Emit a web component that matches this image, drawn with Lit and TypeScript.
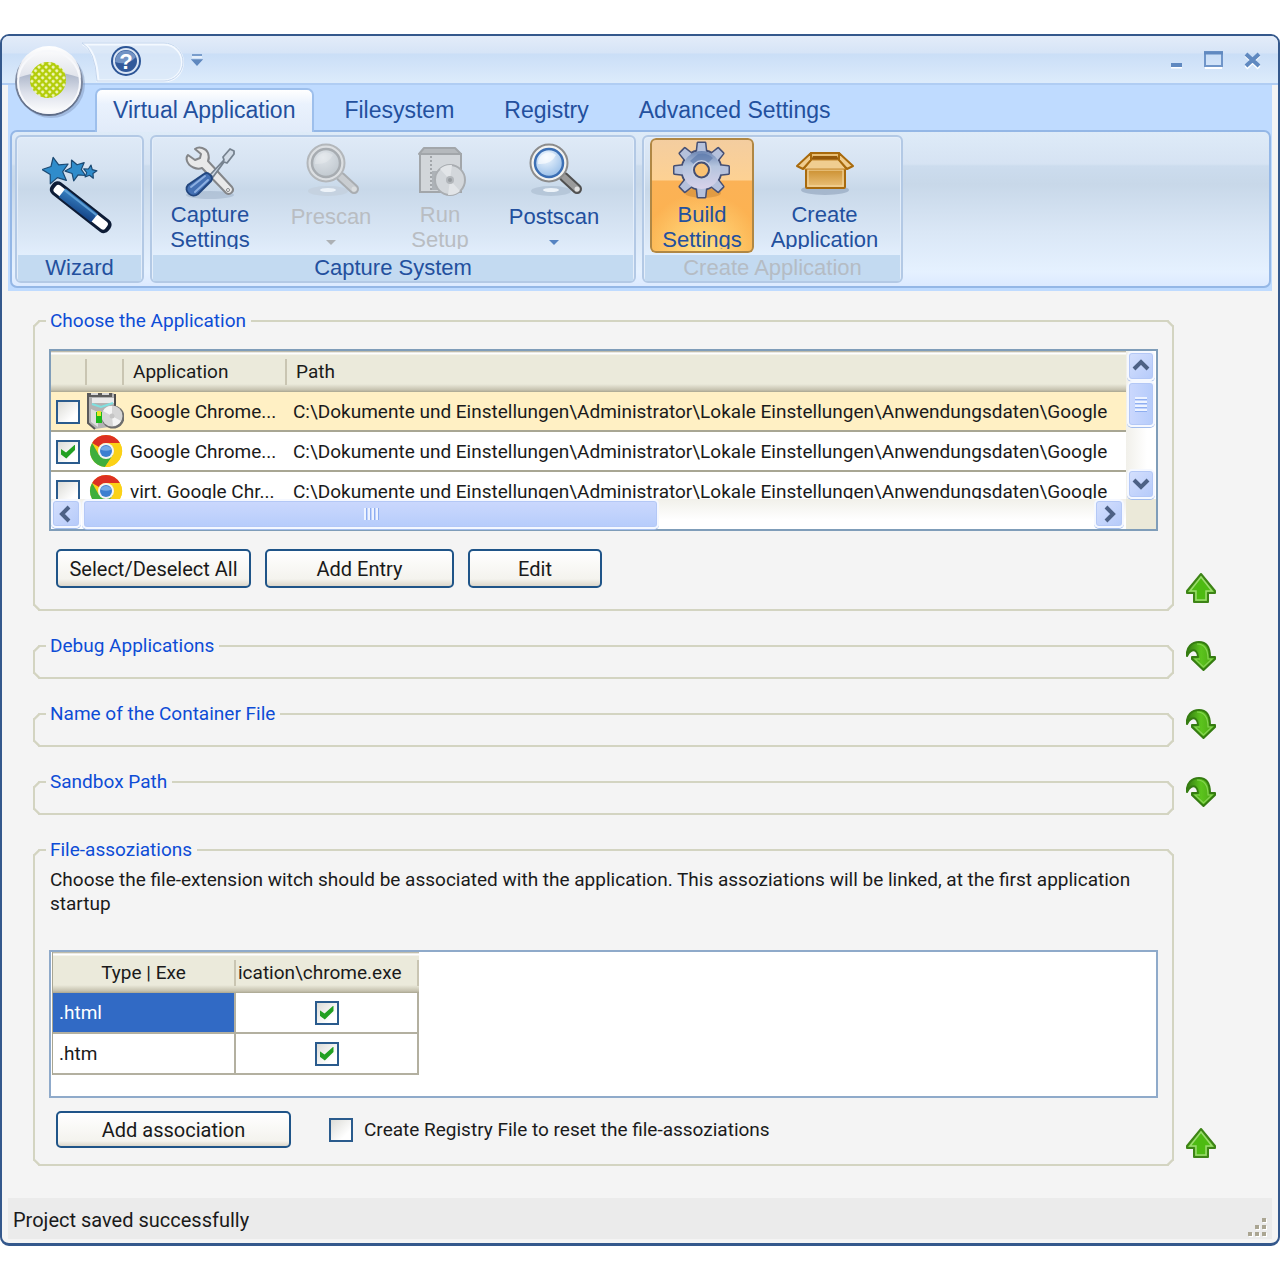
import { LitElement, html, css, svg, nothing, type TemplateResult } from "lit";
import { customElement, state } from "lit/decorators.js";
import { classMap } from "lit/directives/class-map.js";

interface AppEntry {
  name: string;
  icon: "setup" | "chrome";
  checked: boolean;
}

const INSTALL_PATH =
  "C:\\Dokumente und Einstellungen\\Administrator\\Lokale Einstellungen\\Anwendungsdaten\\Google";

const ENTRIES: AppEntry[] = [
  { name: "Google Chrome...", icon: "setup", checked: false },
  { name: "Google Chrome...", icon: "chrome", checked: true },
  { name: "virt. Google Chr...", icon: "chrome", checked: false },
];

const TABS = ["Virtual Application", "Filesystem", "Registry", "Advanced Settings"];

/* ---------- icons ---------- */

const orbIcon = html`<svg width="72" height="74" viewBox="0 0 72 74" aria-hidden="true">
  <defs>
    <linearGradient id="orbRing" x1="0" y1="0" x2="0" y2="1">
      <stop offset="0" stop-color="#9aa3b5" /><stop offset="1" stop-color="#5d6b86" />
    </linearGradient>
    <linearGradient id="orbTop" x1="0" y1="0" x2="0" y2="1">
      <stop offset="0" stop-color="#ffffff" /><stop offset="1" stop-color="#dfe2ea" />
    </linearGradient>
    <linearGradient id="orbLow" x1="0" y1="0.35" x2="0" y2="1">
      <stop offset="0" stop-color="#aab4c8" /><stop offset="0.5" stop-color="#dde1eb" /><stop offset="1" stop-color="#ffffff" />
    </linearGradient>
    <pattern id="orbDots" width="5" height="5" patternUnits="userSpaceOnUse" patternTransform="rotate(45 35 36)">
      <rect width="5" height="5" fill="#b3cd0a" /><circle cx="2.5" cy="2.5" r="1.5" fill="#f6fac6" />
    </pattern>
  </defs>
  <circle cx="37" cy="38" r="34" fill="#7d93b8" opacity="0.45" />
  <circle cx="35" cy="36" r="34" fill="url(#orbRing)" />
  <circle cx="35" cy="36" r="32" fill="url(#orbLow)" />
  <path d="M3 32A32 32 0 0 1 67 32Q51 26 35 26T3 32Z" fill="url(#orbTop)" />
  <circle cx="35" cy="36" r="31" fill="none" stroke="#f7f8fb" stroke-width="2" />
  <circle cx="34" cy="34" r="18" fill="url(#orbDots)" />
</svg>`;

const helpIcon = html`<svg width="104" height="40" viewBox="0 0 104 40" aria-hidden="true">
  <path d="M2 2Q15 8 17 39H83A18 18 0 0 0 83 2Z" fill="#e0ebf9" fill-opacity="0.6" stroke="#f4f9ff" stroke-width="3" />
  <path d="M1 1Q14 8 16 39H83A19 19 0 0 0 83 1Z" fill="none" stroke="#c3d5ed" stroke-width="1" />
  <circle cx="45" cy="19" r="15" fill="#2c5596" />
  <circle cx="45" cy="19" r="13" fill="#dbe6f5" />
  <circle cx="45" cy="19" r="11" fill="#31599a" />
  <path d="M34 20A11 11 0 0 1 55 15Q47 24 34 20Z" fill="#7293c4" />
  <text x="45" y="27" text-anchor="middle" font-family="Liberation Sans, sans-serif" font-weight="700" font-size="22" fill="#fff">?</text>
</svg>`;

const star = (cx: number, cy: number, r: number, turn: number) => {
  const pts = Array.from({ length: 10 }, (_, i) => {
    const a = ((turn + i * 36) * Math.PI) / 180;
    const d = i % 2 ? r * 0.48 : r;
    return `${(cx + d * Math.sin(a)).toFixed(1)},${(cy - d * Math.cos(a)).toFixed(1)}`;
  }).join(" ");
  return svg`<polygon points=${pts} fill="#2f8ccb" stroke="#1c4a73" stroke-width="1.2" stroke-linejoin="round" />`;
};

const wandIcon = html`<svg width="76" height="84" viewBox="0 0 76 84" aria-hidden="true">
  <defs>
    <linearGradient id="wand" x1="0" y1="0" x2="1" y2="1">
      <stop offset="0" stop-color="#3a86c6" /><stop offset="1" stop-color="#134083" />
    </linearGradient>
  </defs>
  ${star(14, 19, 14, -12)} ${star(34, 18, 11, -24)} ${star(48, 20, 7, 8)}
  <g transform="translate(14 34) rotate(38)">
    <rect x="-4" y="-6" width="73" height="15" rx="6" fill="#0d1c36" />
    <rect x="0" y="-3" width="65" height="9" rx="3" fill="#fff" />
    <rect x="9" y="-4" width="41" height="11" fill="url(#wand)" />
    <rect x="9" y="-3" width="41" height="2" fill="#5f9fd4" />
  </g>
</svg>`;

const toolsIcon = html`<svg width="64" height="64" viewBox="0 0 64 64" aria-hidden="true">
  <ellipse cx="32" cy="57" rx="24" ry="4" fill="#8fa2bb" opacity="0.4" />
  <path d="M17 11C21 8 28 10 30 15C31 18 31 21 30 23L54 49C57 53 52 58 48 55L24 30C19 32 11 29 9 23C8 20 9 18 10 17L17 22L22 20L23 16Z"
    fill="#e9e9e9" stroke="#848689" stroke-width="2" stroke-linejoin="round" />
  <circle cx="50" cy="52" r="1.5" fill="#fff" stroke="#848689" />
  <path d="M32 37L46 22L45 19L52 11L56 13L56 16L49 25L46 24L35 39Z" fill="#d2dce8" stroke="#76828f" stroke-width="1.8" stroke-linejoin="round" />
  <path d="M26 36C30 33 36 39 33 43L20 56C14 61 5 53 10 47Z" fill="#4571b4" stroke="#23477f" stroke-width="2" />
  <path d="M13 49L27 38M17 54L30 42" stroke="#8db0e2" stroke-width="2" stroke-linecap="round" />
</svg>`;

const lensIcon = (off: boolean) => html`<svg width="64" height="64" viewBox="0 0 64 64" aria-hidden="true">
  <defs>
    <radialGradient id=${off ? "glassOff" : "glassOn"} cx="0.4" cy="0.3" r="0.8">
      <stop offset="0" stop-color=${off ? "#e0e5ea" : "#f2f9ff"} />
      <stop offset="1" stop-color=${off ? "#bdc5cc" : "#8fb8e6"} />
    </radialGradient>
  </defs>
  <ellipse cx="29" cy="53" rx="20" ry="5" fill=${off ? "#c3cfdb" : "#aebfd2"} opacity="0.7" />
  <ellipse cx="29" cy="52" rx="8" ry="2" fill="#edf3f9" />
  <path d="M42 39L55 51" stroke=${off ? "#a9adb1" : "#505050"} stroke-width="10" stroke-linecap="round" />
  <path d="M42 39L55 51" stroke=${off ? "#c9cdd1" : "#9b9b9b"} stroke-width="6" stroke-linecap="round" />
  <circle cx="55" cy="51" r="2.5" fill=${off ? "#dadddf" : "#e0e0e0"} />
  <circle cx="27" cy="25" r="18.5" fill=${off ? "#dcdfe2" : "#f3f3f1"} stroke=${off ? "#b3b7bb" : "#8c8c8c"} stroke-width="2" />
  <circle cx="27" cy="25" r="14" fill=${off ? "url(#glassOff)" : "url(#glassOn)"} stroke=${off ? "#a7acb1" : "#3c6fb4"} stroke-width="2.5" />
  <path d="M16 26A11 11 0 0 1 34 17Q29 27 16 26Z" fill="#fff" opacity=${off ? "0.2" : "0.6"} />
</svg>`;

const discBoxIcon = html`<svg width="64" height="64" viewBox="0 0 64 64" aria-hidden="true">
  <path d="M16 10H47L53 16H11Z" fill="#b5b9bd" stroke="#a2a6aa" stroke-width="2" stroke-linejoin="round" />
  <rect x="12" y="16" width="41" height="38" fill="#d2d6da" stroke="#a2a6aa" stroke-width="2" />
  <path d="M23 18V53" stroke="#a2a6aa" stroke-width="2" stroke-dasharray="2 2" />
  <path d="M24 33H34V52H24Z" fill="#adb2b7" />
  <circle cx="42" cy="42" r="15" fill="#d3d7db" stroke="#a9adb1" stroke-width="2" />
  <path d="M42 42L32 31A15 15 0 0 1 44 27ZM42 42L52 53A15 15 0 0 1 40 57Z" fill="#e2e5e8" />
  <circle cx="42" cy="42" r="4" fill="#b3b7bb" /><circle cx="42" cy="42" r="2" fill="#979b9f" />
</svg>`;

const gearTeeth = [0, 45, 90, 135, 180, 225, 270, 315].map(
  (a) => svg`<path d="M27 14L28 5H35L36 14Z" transform="rotate(${a} 31.5 32)" />`
);
const gearIcon = html`<svg width="64" height="64" viewBox="0 0 64 64" aria-hidden="true">
  <defs>
    <linearGradient id="gear" x1="0" y1="0" x2="0" y2="1">
      <stop offset="0" stop-color="#6c86b4" /><stop offset="0.4" stop-color="#b4c4de" /><stop offset="1" stop-color="#d8d2ea" />
    </linearGradient>
  </defs>
  <ellipse cx="33" cy="55" rx="18" ry="5" fill="#b9772a" opacity="0.4" />
  <g fill="#a9b8d6" stroke="#454f73" stroke-width="3" stroke-linejoin="round">${gearTeeth}</g>
  <circle cx="31.5" cy="32" r="20" fill="#a9b8d6" stroke="#454f73" stroke-width="2" />
  <g fill="#b5c1dc">${gearTeeth}</g>
  <circle cx="31.5" cy="32" r="19" fill="url(#gear)" />
  <path d="M20 23L31 32L43 20A16 16 0 0 0 28 16Z" fill="#5674a8" opacity="0.6" />
  <circle cx="31.5" cy="32" r="10" fill="#c7cfe3" />
  <circle cx="31.5" cy="32" r="7.5" fill="#fbc272" stroke="#454f73" stroke-width="2" />
</svg>`;

const cartonIcon = html`<svg width="64" height="64" viewBox="0 0 64 64" aria-hidden="true">
  <defs>
    <linearGradient id="carton" x1="0" y1="0" x2="0" y2="1">
      <stop offset="0" stop-color="#c98c2b" /><stop offset="1" stop-color="#ecc37c" />
    </linearGradient>
  </defs>
  <ellipse cx="32" cy="52" rx="24" ry="5" fill="#8195b0" opacity="0.5" />
  <rect x="13" y="30" width="39" height="20" rx="1" fill="url(#carton)" stroke="#a86a0d" stroke-width="2" />
  <rect x="15" y="32" width="35" height="16" fill="none" stroke="#f3d59d" stroke-width="1.2" />
  <path d="M18 15H46L52 24H12Z" fill="#e8bd72" stroke="#a86a0d" stroke-width="2" stroke-linejoin="round" />
  <path d="M20 18H44L46 22H18Z" fill="#95590a" />
  <path d="M18 22H46L53 31H11Z" fill="#f0cd90" stroke="#c58a30" stroke-width="1.2" stroke-linejoin="round" />
  <path d="M18 15L4 28L10 31L18 22ZM46 15L60 28L54 31L46 22Z" fill="#f0cd90" stroke="#a86a0d" stroke-width="2" stroke-linejoin="round" />
</svg>`;

const chromeIcon = html`<svg width="36" height="36" viewBox="0 0 36 36" aria-hidden="true">
  <circle cx="19" cy="18" r="16" fill="#fbd116" />
  <path d="M5.100 10A16 16 0 0 1 32.900 10H19A8 8 0 0 0 12 14Z" fill="#dd3022" />
  <path d="M5.100 10A16 16 0 0 0 18 34L26 22L12 22Z" fill="#3fae3c" />
  <path d="M18 34A16 16 0 0 0 32.900 10H19L26 22Z" fill="#fbd116" />
  <circle cx="19" cy="18" r="8" fill="#f4f4f0" />
  <circle cx="19" cy="18" r="6" fill="#3b7fd0" />
  <path d="M13.500 16.500A6 6 0 0 1 24.500 16.500Q19 19 13.500 16.500Z" fill="#77abe6" />
</svg>`;

const setupIcon = html`<svg width="38" height="38" viewBox="0 0 38 38" aria-hidden="true">
  <path d="M1 1H26L29 4V34L8 37L1 31Z" fill="#b3b3b3" />
  <path d="M1 1H25V5H1Z" fill="#5c5c5c" /><path d="M4 1H11V3H4ZM15 1H22V3H15Z" fill="#d8d8d8" />
  <path d="M5 6H27V11H5Z" fill="#e9e9e9" />
  <path d="M1 1V31L8 37" fill="none" stroke="#5a5a5a" stroke-width="2" />
  <path d="M28 2V14" stroke="#4c4c4c" stroke-width="2" />
  <path d="M5 12L14 15L26 11" fill="none" stroke="#7fe0e0" stroke-width="2" />
  <path d="M4 17L11 20V35L4 30Z" fill="#dedede" />
  <circle cx="26" cy="25" r="11.500" fill="#6e6e6e" /><circle cx="25" cy="24" r="10.500" fill="#d6d6d6" />
  <path d="M25 24L16 19A10 10 0 0 1 25 14ZM25 24L34 29A10 10 0 0 1 26 34Z" fill="#f4f4f4" />
  <circle cx="25" cy="24" r="2.500" fill="#c5c5c5" />
  <path d="M9 20H15V31H9Z" fill="#1cb81c" /><path d="M10 19H14V24H10Z" fill="#e9e62a" />
</svg>`;

const upIcon = html`<svg width="30" height="30" viewBox="0 0 30 30" aria-hidden="true">
  <path d="M15 1L29 18V20H22V29H8V20H1V18Z" fill="#5fbf22" stroke="#3d8416" stroke-width="2" stroke-linejoin="round" />
  <path d="M15 4L26 18H20V27H10V18H4Z" fill="#4dbb12" stroke="#9bdb6f" stroke-width="1.500" />
</svg>`;

const downIcon = html`<svg width="30" height="30" viewBox="0 0 30 30" aria-hidden="true">
  <defs>
    <linearGradient id="bend" x1="0" y1="0" x2="1" y2="0">
      <stop offset="0" stop-color="#347a12" /><stop offset="0.5" stop-color="#5cc41d" /><stop offset="1" stop-color="#49a513" />
    </linearGradient>
  </defs>
  <path d="M1 15C0 6 6 1 13 1C21 1 24 7 24 16H29V18L17.500 29L6 18V16H12C12 11 9 8 5 10C3 11 2 13 1 15Z"
    fill="url(#bend)" stroke="#357c11" stroke-width="2" stroke-linejoin="round" />
  <path d="M11 3C19 3 22 9 22 18H26L17.500 26L9 18H14" fill="none" stroke="#86d353" stroke-width="1.200" />
</svg>`;

const chevron = (d: string) => html`<svg width="20" height="20" viewBox="0 0 20 20" aria-hidden="true">
  <path d=${d} fill="none" stroke="#4d6185" stroke-width="4" />
</svg>`;

@customElement("app-root")
export class AppRoot extends LitElement {
  @state() private activeTab = 0;
  @state() private open = new Set(["apps", "assoc"]);

  static styles = css`
    :host {
      display: block;
      padding: 34px 0;
      background: #fff;
      color: #1a1a1a;
      font: 19px/24px Roboto, "Liberation Sans", sans-serif;
    }
    * { box-sizing: border-box; }
    button, input { font: inherit; color: inherit; margin: 0; }
    button { padding: 0; border: 0; background: none; }
    svg { display: block; flex: none; }

    .window {
      position: relative;
      border: 2px solid #34588c;
      border-bottom-width: 3px;
      border-radius: 9px;
      background: #f4f4f4;
      overflow: hidden;
    }
    .titlebar {
      display: flex;
      align-items: center;
      height: 49px;
      padding: 5px 16px 0 79px;
      background: linear-gradient(#e3ecf9 0, #d6e4f7 17px, #cadef7 18px, #dcebfb 46px);
      border-bottom: 2px solid #b0cdf3;
    }
    .qat-more { margin: 0 0 4px 5px; }
    .window-buttons { display: flex; gap: 19px; margin: 0 0 4px auto; align-items: center; }
    .orb { position: absolute; left: 12px; top: 10px; }

    .ribbon {
      margin: 0 6px;
      padding: 3px 0;
      background: #bfdbff;
      color: #23509e;
      font: 22px/25px "Liberation Sans", Arial, sans-serif;
    }
    .tabs { display: flex; padding-left: 87px; position: relative; font-size: 23px; }
    .tab { height: 44px; padding: 0 25px; }
    .tab.active {
      padding: 0 17px 2px 16px;
      margin-right: 5px;
      border: 2px solid #9dbfec;
      border-bottom: 0;
      border-radius: 7px 7px 0 0;
      background: linear-gradient(#fff, #eaf2fd 14px, #e1ebf9);
    }
    .panel {
      display: flex;
      gap: 6px;
      margin: -2px 1px 0 2px;
      padding: 3px;
      border: 2px solid #94b7e6;
      border-radius: 7px;
      background: linear-gradient(#deebf8, #d6e3f3 32px, #ccdcee 34px, #c8d8e9 52px, #dae7f6 100px, #e5f1ff 140px, #dceaff);
    }
    .group {
      display: flex;
      flex-direction: column;
      border: 2px solid #b3c9e5;
      border-radius: 6px;
      box-shadow: inset 0 0 0 1px #e4eefa;
      background: linear-gradient(#dfeaf7, #d5e2f1 32px, #c8d8e9 52px, #dae7f6 100px, #e3effd 120px);
    }
    .group-body { display: flex; height: 118px; padding: 1px 6px 0; }
    .group-label {
      height: 26px;
      margin: 0 1px;
      text-align: center;
      line-height: 26px;
      background: #c3daf1;
    }
    .group-label.off { color: #b5bcc4; }
    .wizard { width: 129px; }
    .capture { width: 486px; }
    .create { width: 261px; }

    .tool {
      display: flex;
      flex-direction: column;
      align-items: center;
      height: 115px;
      border-radius: 6px;
      white-space: pre-line;
    }
    .tool:disabled { color: #b9bdc2; }
    .tool-label { height: 47px; overflow: hidden; }
    .tool-label.menu { height: 38px; padding-top: 2px; }
    .w-s { width: 80px; }
    .w-m { width: 104px; }
    .w-l { width: 138px; }
    .grow { flex: 1; }
    .tool.wand { padding-top: 14px; }
    .caret { border: 5px solid transparent; border-top-color: #5583c2; border-bottom: 0; }
    .tool:disabled .caret { border-top-color: #adb1b5; }
    .tool.selected {
      background:
        radial-gradient(60px 60px at 50% 100%, #ffe38b, #ffd27400),
        linear-gradient(#f3cda0 0, #fdd193 42px, #fbb256 43px, #fdb24d 100%);
      box-shadow: inset 0 0 0 2px #b08744;
    }

    main {
      display: flex;
      flex-direction: column;
      gap: 23px;
      padding: 18px 62px 32px 31px;
    }
    .section { display: flex; align-items: flex-end; gap: 12px; }
    fieldset {
      flex: 1;
      min-width: 0;
      min-height: 45px;
      margin: 0;
      padding: 0 14px;
      border: 2px solid #d3d4c1;
      border-radius: 6px;
      corner-shape: bevel;
    }
    legend { margin-left: -3px; padding: 0 5px 0 4px; color: #0d4cd6; }
    .toggle { margin-bottom: 8px; }

    .push {
      height: 39px;
      border: 2px solid #1f5488;
      border-radius: 5px;
      background: linear-gradient(#fff, #f4f3ee 28px, #dcd7cb);
      font-size: 20px;
    }
    .push.short { height: 37px; }
    .w195 { min-width: 195px; }
    .w189 { min-width: 189px; }
    .w134 { min-width: 134px; }
    .w235 { min-width: 235px; }
    .actions { display: flex; align-items: center; gap: 14px; padding: 18px 7px 21px; }
    .actions.assoc { gap: 38px; padding: 13px 7px 16px; }
    .check-label { display: flex; align-items: center; gap: 11px; }

    input[type="checkbox"] {
      appearance: none;
      display: grid;
      place-items: center;
      flex: none;
      width: 24px;
      height: 24px;
      border: 2px solid #2a5b8d;
      background: linear-gradient(135deg, #dcdcd7, #fff 75%);
    }
    input:checked::before {
      content: "";
      width: 14px;
      height: 14px;
      background: #22a022;
      clip-path: polygon(0 32%, 36% 58%, 100% 0, 100% 40%, 38% 100%, 0 72%);
    }

    .list {
      display: grid;
      grid-template: 148px 30px / 1fr 30px;
      margin-top: 16px;
      border: 2px solid #7f9db9;
      background: #ebe9d9;
    }
    .viewport { overflow: hidden; background: #fff; }
    table { border-collapse: separate; border-spacing: 0; table-layout: fixed; }
    .apps { width: 100%; }
    th, td { height: 41px; padding: 0; font-weight: 400; text-align: left; white-space: nowrap; overflow: hidden; }
    thead th { background: linear-gradient(#a9a690 0, #fff 2px, #fff 3px, #ebeadb 4px, #ebeadb 33px, #c5c1ae 39px, #a9a690); }
    .head { display: flex; align-items: center; height: 26px; border-right: 2px solid #c9c5b2; box-shadow: 1px 0 #fff; }
    .apps th:last-child .head { border: 0; }
    .apps th .head { padding-left: 9px; }
    .apps tbody td { height: 40px; border-bottom: 2px solid #a8a693; padding: 1px 0 0 6px; }
    .apps tbody tr.hot td { background: #fff0c4; }
    .apps tbody td.first { padding-left: 5px; }
    .apps tbody td.pic { padding: 0; }
    .c-check { width: 36px; }
    .c-icon { width: 37px; }
    .c-name { width: 163px; }

    .bar { display: flex; background: linear-gradient(#f1f0ea, #fff 70%); }
    .bar.v { flex-direction: column; background: linear-gradient(90deg, #f1f0ea, #fff 70%); }
    .bar-button, .thumb {
      display: grid;
      place-items: center;
      border: 2px solid #f5f8ff;
      border-radius: 5px;
      box-shadow: inset 0 0 0 1px #b4c8f6, 0 1px #a3bdec;
      background: linear-gradient(135deg, #d5e0fd, #b5cafa);
    }
    .bar-button { width: 30px; height: 29px; flex: none; }
    .v .bar-button { width: 28px; height: 30px; margin-left: 1px; }
    .track { flex: 1; display: flex; }
    .h .thumb { width: 57%; margin-left: 1px; background: linear-gradient(#cbd8fd, #b6ccfb); }
    .v .thumb { height: 46px; width: 28px; margin-left: 1px; background: linear-gradient(90deg, #cbd8fd, #b6ccfb); }
    .h .bar-button:last-child { margin-right: 2px; }

    .hint { margin: 6px 0 34px 1px; }
    .assoc-box { height: 148px; border: 2px solid #8faaca; background: #fff; padding-left: 1px; }
    .assoc-table { width: 367px; border-left: 1px solid #a8a693; }
    .assoc-table th .head { justify-content: center; }
    .assoc-table th:last-child .head { justify-content: flex-start; padding-left: 2px; }
    .assoc-table tbody td { border-right: 2px solid #b3b0a0; border-bottom: 2px solid #b3b0a0; padding-left: 6px; }
    .assoc-table tbody td.picked { background: #316ac5; color: #fff; }
    .assoc-table tbody td.tick { padding-left: 0; }
    .assoc-table input { margin: 0 auto; }

    footer {
      display: flex;
      justify-content: space-between;
      align-items: center;
      height: 41px;
      margin: 0 6px 4px;
      padding: 5px 5px 2px;
      background: #ebebeb;
      font-size: 20px;
    }
    .grip { align-self: flex-end; }
  `;

  private toggle(id: string) {
    const next = new Set(this.open);
    next.has(id) ? next.delete(id) : next.add(id);
    this.open = next;
  }

  private section(id: string, title: string, body: TemplateResult | typeof nothing = nothing) {
    const open = this.open.has(id);
    return html`<div class="section">
      <fieldset>
        <legend>${title}</legend>
        ${open ? body : nothing}
      </fieldset>
      <button class="toggle" aria-label="Toggle ${title}" aria-expanded=${open} @click=${() => this.toggle(id)}>
        ${open ? upIcon : downIcon}
      </button>
    </div>`;
  }

  private renderTitlebar() {
    return html`<header class="titlebar">
        <button aria-label="Help">${helpIcon}</button>
        <button class="qat-more" aria-label="Customize toolbar">
          <svg width="14" height="14" viewBox="0 0 14 14">
            <path d="M2 2H12M2.500 7H11.500L7 12Z" stroke="#5f88bf" stroke-width="1.500" fill="#5f88bf" />
            <path d="M2 4H12" stroke="#fff" />
          </svg>
        </button>
        <div class="window-buttons">
          <button aria-label="Minimize">
            <svg width="16" height="20" viewBox="0 0 16 20">
              <path d="M3 17.500H14" stroke="#fff" stroke-width="2" /><path d="M3 15H14" stroke="#6089c0" stroke-width="4" />
            </svg>
          </button>
          <button aria-label="Maximize">
            <svg width="20" height="20" viewBox="0 0 20 20">
              <path d="M2 18H19" stroke="#fff" stroke-width="2" />
              <path d="M2 2H19V16H2Z" fill="none" stroke="#6f95c9" stroke-width="2" /><path d="M1 3H20" stroke="#6089c0" stroke-width="3" />
            </svg>
          </button>
          <button aria-label="Close">
            <svg width="20" height="20" viewBox="0 0 20 20">
              <path d="M4 5L17 18M17 5L4 18" stroke="#fff" stroke-width="4" />
              <path d="M4 4L17 16M17 4L4 16" stroke="#6089c0" stroke-width="4" />
            </svg>
          </button>
        </div>
      </header>
      <button class="orb" aria-label="Application menu">${orbIcon}</button>`;
  }

  private renderRibbon() {
    return html`<nav class="ribbon">
      <div class="tabs" role="tablist">
        ${TABS.map(
          (name, i) => html`<button
            role="tab"
            aria-selected=${i === this.activeTab}
            class=${classMap({ tab: true, active: i === this.activeTab })}
            @click=${() => (this.activeTab = i)}
          >${name}</button>`
        )}
      </div>
      <div class="panel">
        <div class="group wizard">
          <div class="group-body">
            <button class="tool wand grow" aria-label="Wizard">${wandIcon}</button>
          </div>
          <div class="group-label">Wizard</div>
        </div>
        <div class="group capture">
          <div class="group-body">
            <button class="tool w-m">${toolsIcon}<span class="tool-label">${"Capture\nSettings"}</span></button>
            <button class="tool w-l" disabled>${lensIcon(true)}<span class="tool-label menu">Prescan</span><span class="caret"></span></button>
            <button class="tool w-s" disabled>${discBoxIcon}<span class="tool-label">${"Run\nSetup"}</span></button>
            <button class="tool grow">${lensIcon(false)}<span class="tool-label menu">Postscan</span><span class="caret"></span></button>
          </div>
          <div class="group-label">Capture System</div>
        </div>
        <div class="group create">
          <div class="group-body">
            <button class="tool w-m selected">${gearIcon}<span class="tool-label">${"Build\nSettings"}</span></button>
            <button class="tool grow">${cartonIcon}<span class="tool-label">${"Create\nApplication"}</span></button>
          </div>
          <div class="group-label off">Create Application</div>
        </div>
      </div>
    </nav>`;
  }

  private renderApps() {
    return html`<div class="list">
        <div class="viewport">
          <table class="apps">
            <colgroup><col class="c-check" /><col class="c-icon" /><col class="c-name" /><col /></colgroup>
            <thead>
              <tr>
                <th><div class="head"></div></th>
                <th><div class="head"></div></th>
                <th><div class="head">Application</div></th>
                <th><div class="head">Path</div></th>
              </tr>
            </thead>
            <tbody>
              ${ENTRIES.map(
                (e) => html`<tr class=${classMap({ hot: e.icon === "setup" })}>
                  <td class="first"><input type="checkbox" aria-label=${e.name} .checked=${e.checked} /></td>
                  <td class="pic">${e.icon === "setup" ? setupIcon : chromeIcon}</td>
                  <td>${e.name}</td>
                  <td>${INSTALL_PATH}</td>
                </tr>`
              )}
            </tbody>
          </table>
        </div>
        <div class="bar v">
          <button class="bar-button" aria-label="Scroll up">${chevron("M3 13L10 6L17 13")}</button>
          <div class="track">
            <div class="thumb">
              <svg width="12" height="16" viewBox="0 0 12 16"><path d="M0 2H12M0 6H12M0 10H12M0 14H12" stroke="#edf3ff" stroke-width="2" /><path d="M0 3.500H12M0 7.500H12M0 11.500H12M0 15.500H12" stroke="#8eaef0" /></svg>
            </div>
          </div>
          <button class="bar-button" aria-label="Scroll down">${chevron("M3 6L10 13L17 6")}</button>
        </div>
        <div class="bar h">
          <button class="bar-button" aria-label="Scroll left">${chevron("M13 3L6 10L13 17")}</button>
          <div class="track">
            <div class="thumb">
              <svg width="16" height="12" viewBox="0 0 16 12"><path d="M2 0V12M6 0V12M10 0V12M14 0V12" stroke="#edf3ff" stroke-width="2" /><path d="M3.500 0V12M7.500 0V12M11.500 0V12M15.500 0V12" stroke="#8eaef0" /></svg>
            </div>
          </div>
          <button class="bar-button" aria-label="Scroll right">${chevron("M7 3L14 10L7 17")}</button>
        </div>
      </div>
      <div class="actions">
        <button class="push w195">Select/Deselect All</button>
        <button class="push w189">Add Entry</button>
        <button class="push w134">Edit</button>
      </div>`;
  }

  private renderAssociations() {
    return html`<p class="hint">
        Choose the file-extension witch should be associated with the application. This assoziations will be linked, at the first application startup
      </p>
      <div class="assoc-box">
        <table class="assoc-table">
          <thead>
            <tr>
              <th><div class="head">Type | Exe</div></th>
              <th><div class="head">ication\\chrome.exe</div></th>
            </tr>
          </thead>
          <tbody>
            ${[".html", ".htm"].map(
              (ext, i) => html`<tr>
                <td class=${classMap({ picked: i === 0 })}>${ext}</td>
                <td class="tick"><input type="checkbox" aria-label="Associate ${ext}" .checked=${true} /></td>
              </tr>`
            )}
          </tbody>
        </table>
      </div>
      <div class="actions assoc">
        <button class="push short w235">Add association</button>
        <label class="check-label"><input type="checkbox" />Create Registry File to reset the file-assoziations</label>
      </div>`;
  }

  render() {
    return html`<div class="window">
      ${this.renderTitlebar()} ${this.renderRibbon()}
      <main>
        ${this.section("apps", "Choose the Application", this.renderApps())}
        ${this.section("debug", "Debug Applications")}
        ${this.section("container", "Name of the Container File")}
        ${this.section("sandbox", "Sandbox Path")}
        ${this.section("assoc", "File-assoziations", this.renderAssociations())}
      </main>
      <footer>
        <span>Project saved successfully</span>
        <svg class="grip" width="20" height="20" viewBox="0 0 20 20" aria-hidden="true">
          <path d="M16 2H20V6H16ZM9 9H13V13H9ZM16 9H20V13H16ZM2 16H6V20H2ZM9 16H13V20H9ZM16 16H20V20H16Z" fill="#fff" />
          <path d="M15 1H19V5H15ZM8 8H12V12H8ZM15 8H19V12H15ZM1 15H5V19H1ZM8 15H12V19H8ZM15 15H19V19H15Z" fill="#aaa592" />
        </svg>
      </footer>
    </div>`;
  }
}
